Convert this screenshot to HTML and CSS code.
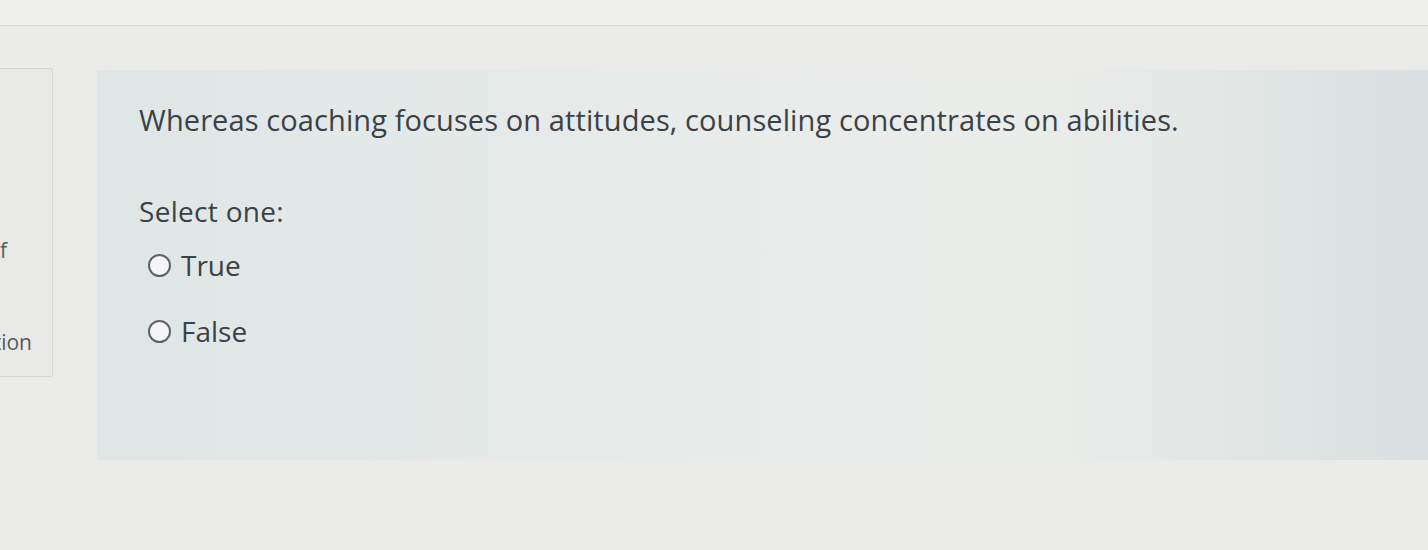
FILE: index.html
```html
<!DOCTYPE html>
<html lang="en">
<head>
    <meta charset="UTF-8">
    <meta name="viewport" content="width=device-width, initial-scale=1.0">
    <title>Quiz - Question 1</title>
    <link rel="stylesheet" href="styles.css">
</head>
<body>
    <div class="topbar"></div>

    <div class="question">
        <div class="info">
            <div class="info-line marked">Marked out of</div>
            <div class="info-line flag">Flag question</div>
        </div>

        <div class="formulation">
            <p class="qtext">Whereas coaching focuses on attitudes, counseling concentrates on abilities.</p>

            <div class="prompt">Select one:</div>
            <div class="answer">
                <label class="option">
                    <span class="radio"></span>
                    <span>True</span>
                </label>
                <label class="option">
                    <span class="radio"></span>
                    <span>False</span>
                </label>
            </div>
        </div>
    </div>
</body>
</html>
```

FILE: styles.css
```css
* {
    margin: 0;
    padding: 0;
    box-sizing: border-box;
}

body {
    font-family: 'Open Sans', 'Noto Sans', sans-serif;
    background: #ebebe9;
    color: #3b4144;
    height: 550px;
    overflow: hidden;
}

.topbar {
    height: 26px;
    border-bottom: 1px solid #d9d9d7;
    background: #f0f0ee;
}

.question {
    display: flex;
    align-items: flex-start;
    gap: 44px;
    padding-top: 42px;
}

/* left info panel, only its right edge shows */
.info {
    width: 53px;
    height: 309px;
    background: #e9e9e8;
    border: 1px solid #d6d6d4;
    border-left: none;
    border-radius: 0 3px 3px 0;
    overflow: hidden;
    padding-top: 166px;
    font-size: 21px;
    color: #55595b;
}

.info-line {
    white-space: nowrap;
    direction: rtl;
    line-height: 30px;
}

.info-line.marked {
    padding-right: 45px;
}

.info-line.flag {
    margin-top: 62px;
    padding-right: 20px;
}

.formulation {
    flex: 1;
    height: 390px;
    margin-top: 2px;
    padding: 30px 0 0 42px;
    background: linear-gradient(90deg, #dfe6e6 0%, #e7ebea 40%, #ebedea 70%, #d9e0e1 100%);
}

.qtext {
    font-size: 29px;
    line-height: 40px;
    letter-spacing: 0.1px;
}

.prompt {
    margin-top: 52px;
    font-size: 28px;
    line-height: 38px;
    letter-spacing: 0.3px;
}

.answer {
    display: flex;
    flex-direction: column;
    gap: 28px;
    margin-top: 16px;
    padding-left: 9px;
}

.option {
    display: flex;
    align-items: center;
    gap: 10px;
    font-size: 28px;
    line-height: 38px;
    letter-spacing: 0;
}

.radio {
    width: 23px;
    height: 23px;
    border: 2px solid #5d6366;
    border-radius: 50%;
    background: #f4f5f4;
}
```
